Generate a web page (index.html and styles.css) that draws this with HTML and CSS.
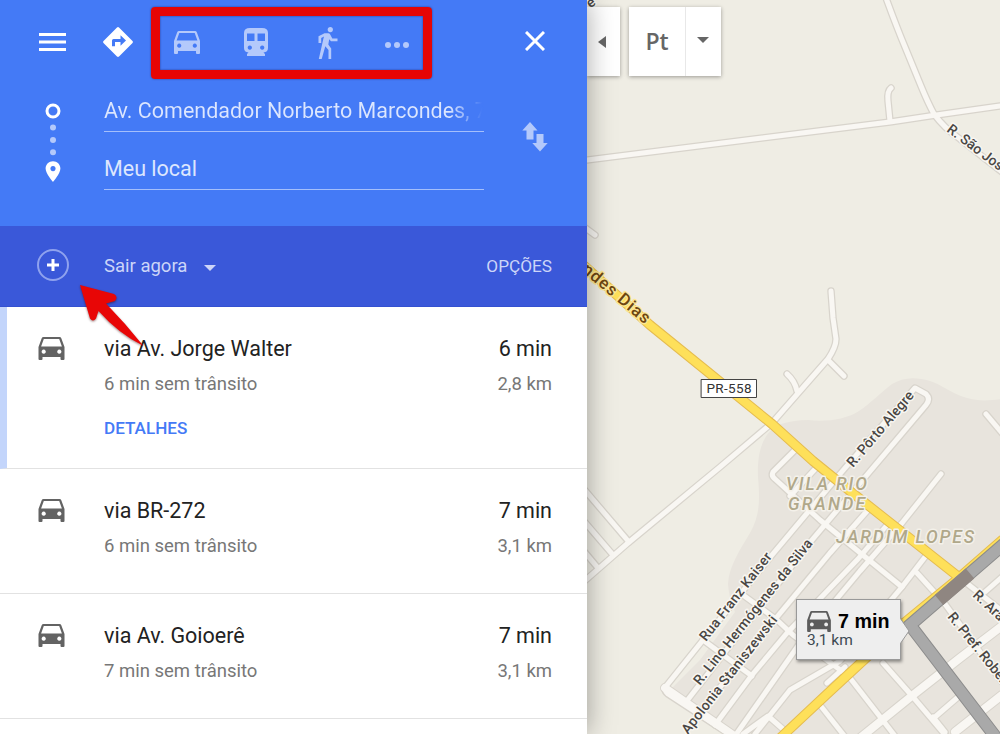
FILE: index.html
```html
<!DOCTYPE html>
<html lang="pt-BR">
<head>
  <meta charset="UTF-8">
  <title>Rotas</title>
  <link rel="stylesheet" href="styles.css">
</head>
<body>
  <!-- shared icons -->
  <svg class="sprite">
    <symbol id="car" viewBox="0 0 26 23">
      <path fill-rule="evenodd" d="M5 0H21Q22.3 0 22.8 1.3L26 10V22Q26 23 25 23H23Q22 23 22 22V20H4V22Q4 23 3 23H1Q0 23 0 22V10L3.2 1.3Q3.7 0 5 0zM5.3 2L2.6 9.4H23.4L20.7 2zM5.2 12.6a2.1 2.1 0 1 0 .01 0zM20.8 12.6a2.1 2.1 0 1 0 .01 0z"/>
    </symbol>
  </svg>

  <div class="app">
    <div class="panel">
      <div class="search">
        <div class="toolbar">
          <button class="toolbar__button">
            <svg width="27" height="18" viewBox="0 0 27 18"><path d="M0 0h27v3H0zM0 7.5h27v3H0zM0 15h27v3H0z"/></svg>
          </button>
          <button class="toolbar__button">
            <svg width="30" height="30" viewBox="0 0 30 30"><path fill-rule="evenodd" d="M14 .5Q15 -.3 16 .5L29.5 14Q30.3 15 29.5 16L16 29.5Q15 30.3 14 29.5L.5 16Q-.3 15 .5 14zM17.5 8.2V12H10.5Q9 12 9 13.5V19.2H12V15H17.5V18.8L23 13.5z"/></svg>
          </button>
          <div class="modes">
            <button class="modes__item"><svg width="26" height="23"><use href="#car"/></svg></button>
            <button class="modes__item">
              <svg width="24" height="28" viewBox="0 0 24 28"><path fill-rule="evenodd" d="M6 0H18Q24 0 24 5V20Q24 24.2 19.5 24.5L21 26V28H3V26L4.5 24.5Q0 24.2 0 20V5Q0 0 6 0zM3 5.5V13H10.5V5.5zM13.5 5.5V13H21V5.5zM5.8 17.5a2.1 2.1 0 1 0 .01 0zM18.2 17.5a2.1 2.1 0 1 0 .01 0z"/></svg>
            </button>
            <button class="modes__item modes__item--walk">
              <svg width="20" height="32" viewBox="0 0 20 32">
                <circle cx="12.3" cy="2.6" r="2.6"/>
                <path d="M6.5 6.3H10.3Q11.5 6.3 12.2 7.6L14.3 11.5H19.5V14.3H13L11.2 12.3L10.3 17.5L13.2 21.5V32H10.5V23L7.3 19.2L3.7 32H.8L5.2 12.5L6 9.5L3.2 11V16H.5V9.3z"/>
              </svg>
            </button>
            <button class="modes__item">
              <svg class="modes__more" width="24" height="6" viewBox="0 0 24 6"><circle cx="3" cy="3" r="3"/><circle cx="12" cy="3" r="3"/><circle cx="21" cy="3" r="3"/></svg>
            </button>
          </div>
          <button class="toolbar__button toolbar__button--close">
            <svg width="20" height="20" viewBox="0 0 20 20"><path class="cross" d="M1 1L19 19M19 1L1 19"/></svg>
          </button>
        </div>

        <div class="waypoints">
          <div class="waypoints__marks">
            <svg width="16" height="80" viewBox="0 0 16 80">
              <circle class="ring" cx="8" cy="8" r="6"/>
              <g class="dots"><circle cx="8" cy="24.5" r="3"/><circle cx="8" cy="37" r="3"/><circle cx="8" cy="49.3" r="3"/></g>
              <path fill-rule="evenodd" d="M8 58.3c4.2 0 7.4 3.2 7.4 7.3 0 5-7.4 13.4-7.4 13.4S.6 70.6.6 65.6c0-4.1 3.2-7.3 7.4-7.3zM8 63a2.6 2.6 0 1 0 .01 0z"/>
            </svg>
          </div>
          <div class="waypoints__fields">
            <div class="field field--long">Av. Comendador Norberto Marcondes, 7</div>
            <div class="field">Meu local</div>
          </div>
          <button class="waypoints__swap">
            <svg width="26" height="30" viewBox="0 0 26 30"><path d="M8 0L15.5 8.5H11.5V17.5H4.5V8.5H.3zM14.5 12H21.5V21H25.7L18 29.5L10.3 21H14.5z"/></svg>
          </button>
        </div>
      </div>

      <div class="depart">
        <button class="depart__add">
          <svg width="32" height="32" viewBox="0 0 32 32"><circle cx="16" cy="16" r="15"/><path d="M10 16H22M16 10V22"/></svg>
        </button>
        <span class="depart__time">Sair agora</span>
        <span class="depart__caret"></span>
        <span class="depart__options">OPÇÕES</span>
      </div>

      <div class="route route--active">
        <svg class="route__icon" width="27" height="23"><use href="#car"/></svg>
        <div class="route__info">
          <h2 class="route__name">via Av. Jorge Walter</h2>
          <p class="route__note">6 min sem trânsito</p>
          <a class="route__details">DETALHES</a>
        </div>
        <div class="route__totals">
          <p class="route__time">6 min</p>
          <p class="route__note">2,8 km</p>
        </div>
      </div>
      <div class="route">
        <svg class="route__icon" width="27" height="23"><use href="#car"/></svg>
        <div class="route__info">
          <h2 class="route__name">via BR-272</h2>
          <p class="route__note">6 min sem trânsito</p>
        </div>
        <div class="route__totals">
          <p class="route__time">7 min</p>
          <p class="route__note">3,1 km</p>
        </div>
      </div>
      <div class="route">
        <svg class="route__icon" width="27" height="23"><use href="#car"/></svg>
        <div class="route__info">
          <h2 class="route__name">via Av. Goioerê</h2>
          <p class="route__note">7 min sem trânsito</p>
        </div>
        <div class="route__totals">
          <p class="route__time">7 min</p>
          <p class="route__note">3,1 km</p>
        </div>
      </div>

      <svg class="arrow" width="70" height="70" viewBox="78 282 70 70">
        <path d="M80 285L114 294Q118.5 297 115 301L106 303.5Q126 324 143.5 346Q119 334 98.5 311L96 318.5Q93 322.5 90 318.5z"/>
      </svg>
    </div>

    <div class="map">
      <svg class="map__canvas" width="413" height="734" viewBox="587 0 413 734">
        <defs>
          <g id="streets">
            <path d="M587 160L890 122L933 115.5L1000 106"/>
            <path d="M886 -2Q897 28 905 47L921 86Q928 103 934 114Q944 128 960 139L1002 172"/>
            <path d="M890 121L888 101Q887 91 891 88"/>
            <path d="M580 224L595 235"/>
            <path d="M831 291L833 318L836 339Q836 347 828 359L772 423L720 467L628 543L580 585"/>
            <path d="M828 360L844 376M787 374Q795 381 797 391"/>
            <path d="M583 488L629 542M583 520L613 555M583 550L598 568"/>
            <path d="M723 730L668 694Q663 690 667 685L703 640L772 555L845 468L915 388L926 394Q931 399 926 405L812 540L686 702"/>
            <path d="M795 450L773 472Q771 476 775 479L820 520L853 547L902 587"/>
            <path d="M817 467L790 496M868 510L830 553L777 617L700 712"/>
            <path d="M887 525L858 559L787 633L752 675L715 725"/>
            <path d="M941 474L902 523L860 571L800 643L735 736"/>
            <path d="M925 557L902 587L840 661L790 690L755 734M743 734L768 716L784 730"/>
            <path d="M743 595L777 620L793 635L843 672M703 640L730 660L752 676"/>
            <path d="M917 573L945 604L1002 682M960 578L1002 611"/>
            <path d="M850 678L895 736M883 663L913 697L946 736M820 705L846 738"/>
            <path d="M935 717L957 698M933 717L945 732M985 592L1002 577M827 683L845 667"/>
            <path d="M986 414L1002 433"/>
          </g>
          <g id="avenues">
            <path d="M860 738L913 695L960 658L1002 626M955 732L1002 695M665 688L740 740"/>
          </g>
          <g id="highways">
            <path d="M580 262L650 325L772 424L813 461L850 491L960 578"/>
            <path d="M778 740L826 695L905 622L955 581L1002 540"/>
          </g>
        </defs>

        <path class="urban" d="M1002 399C988 401 977 401 967 398C950 393 941 384 930 381C914 376 902 378 892 384C880 393 871 403 859 411C845 420 825 422 808 420Q793 420 778 425C762 434 757 454 758 477C760 500 760 515 750 533C740 550 729 566 728 584Q729 599 735 612L700 660L670 690L730 738H1002z"/>

        <use class="casing" href="#streets"/>
        <use class="casing casing--avenue" href="#avenues"/>
        <use class="street" href="#streets"/>
        <use class="street street--avenue" href="#avenues"/>
        <use class="highway-casing" href="#highways"/>
        <use class="highway" href="#highways"/>

        <path class="path-edge" d="M1004 544L910 625L998 740"/>
        <path class="path" d="M1004 544L910 625L998 740"/>
        <path class="path-overlap" d="M939 600L970 573.5"/>

        <text class="label label--highway" transform="translate(581 271) rotate(40)" textLength="83">ndes Dias</text>
        <text class="label" transform="translate(576 20) rotate(-38)" textLength="26">nde</text>
        <text class="label" transform="translate(946 131) rotate(37)">R. São José</text>
        <text class="label" transform="translate(853 468) rotate(-49.5)" textLength="95">R. Pôrto Alegre</text>
        <text class="label" transform="translate(706 642) rotate(-52)" textLength="108">Rua Franz Kaiser</text>
        <text class="label" transform="translate(700 686) rotate(-51.5)" textLength="182">R. Lino Hermógenes da Silva</text>
        <text class="label" transform="translate(688 735) rotate(-52)" textLength="146">Apolonia Staniszewski</text>
        <text class="label" transform="translate(972 596) rotate(43)">R. Araruna</text>
        <text class="label" transform="translate(947 617) rotate(51)">R. Pref. Roberto</text>
        <text class="district" x="786" y="490" textLength="81">VILA RIO</text>
        <text class="district" x="788" y="510" textLength="77">GRANDE</text>
        <text class="district" x="836" y="543" textLength="138">JARDIM LOPES</text>

        <rect class="shield" x="701.5" y="379.5" width="55" height="18"/>
        <text class="shield-text" x="706.5" y="393" textLength="45">PR-558</text>
      </svg>

      <div class="map__controls">
        <button class="collapse"></button>
        <div class="language">
          <span class="language__name">Pt</span>
          <span class="language__caret"></span>
        </div>
      </div>

      <div class="callout">
        <svg class="callout__icon" width="24" height="21"><use href="#car"/></svg>
        <b class="callout__time">7 min</b>
        <span class="callout__distance">3,1 km</span>
        <svg class="callout__tip" width="11" height="28" viewBox="0 0 11 28"><path d="M0 1L9 14L0 27"/></svg>
      </div>
    </div>
  </div>
</body>
</html>
```

FILE: styles.css
```css
*, *:before, *:after {
  box-sizing: border-box;
}

body {
  margin: 0;
  font-family: Roboto, sans-serif;
  overflow: hidden;
}

h2, p {
  margin: 0;
  font-weight: 400;
}

button {
  display: flex;
  align-items: center;
  justify-content: center;
  padding: 0;
  border: 0;
  background: none;
  cursor: pointer;
}

.sprite {
  display: none;
}

.app {
  display: flex;
  height: 734px;
}

/* Panel */
.panel {
  position: relative;
  z-index: 1;
  width: 587px;
  background: #fff;
  box-shadow: 0 0 26px rgba(0,0,0,0.35);
}

.search {
  height: 226px;
  background: #447af6;
  fill: #fff;
}

.toolbar {
  display: flex;
  height: 84px;
  padding: 0 19px;
}

.toolbar__button {
  width: 66px;
}

.toolbar__button--close {
  margin-left: auto;
  padding-bottom: 2px;
}

.cross {
  stroke: #fff;
  stroke-width: 3;
}

.modes {
  position: relative;
  display: flex;
  width: 281px;
  padding-left: 1px;
  fill: #b4c9fb;
}

.modes:after {
  content: '';
  position: absolute;
  top: 7px;
  left: 0;
  width: 281px;
  height: 72px;
  border: 9px solid #e60505;
  border-radius: 4px;
  box-shadow: 0 0 2px rgba(30,20,90,0.7), inset 0 0 2px rgba(30,20,90,0.7);
}

.modes__item {
  flex: 1;
}

.modes__item--walk {
  padding: 2px 0 0 3px;
}

.modes__more {
  margin-top: 5px;
}

.waypoints {
  display: flex;
}

.waypoints__marks {
  width: 104px;
  padding: 19px 0 0 45px;
}

.ring {
  fill: none;
  stroke: #fff;
  stroke-width: 3;
}

.dots {
  fill: #b4c9fb;
}

.waypoints__fields {
  width: 380px;
  padding-top: 6px;
}

.field {
  height: 42px;
  margin-bottom: 16px;
  border-bottom: 1px solid #a5bffb;
  font-size: 21.5px;
  line-height: 42px;
  color: #dce6fe;
  white-space: nowrap;
}

.field--long {
  color: transparent;
  background: linear-gradient(90deg, #dce6fe 345px, #447af6 378px);
  background-clip: text;
  -webkit-background-clip: text;
}

.waypoints__swap {
  width: 26px;
  height: 30px;
  margin: 38px 0 0 38px;
  fill: #b4c9fb;
}

.depart {
  display: flex;
  align-items: center;
  height: 81px;
  padding: 0 35px 3px 37px;
  background: #3a58d9;
  border-bottom: 1px solid #3451d0;
  font-size: 18.5px;
  color: #ccd5f8;
}

.depart__add {
  width: 32px;
  margin-right: 35px;
  fill: none;
}

.depart__add circle {
  stroke: #8fa2ee;
  stroke-width: 2;
}

.depart__add path {
  stroke: #fff;
  stroke-width: 3;
}

.depart__caret {
  margin: 6px 0 0 17px;
  border: 6px solid transparent;
  border-top-color: #ccd5f8;
  border-bottom: 0;
}

.depart__time,
.depart__options {
  padding-top: 2px;
}

.depart__options {
  margin-left: auto;
  font-size: 17.2px;
}

/* Routes */
.route {
  display: flex;
  height: 125px;
  padding: 27px 35px 0 38px;
  border-bottom: 1px solid #e2e2e2;
}

.route--active {
  height: 162px;
  padding-left: 31px;
  border-left: 7px solid #c3d5fb;
}

.route__icon {
  margin-top: 3px;
  fill: #636363;
}

.route__info {
  flex: 1;
  margin-left: 39px;
}

.route__totals {
  text-align: right;
}

.route__name,
.route__time {
  font-size: 21.5px;
  line-height: 30px;
  color: #222;
}

.route__note {
  padding-top: 8px;
  font-size: 18.5px;
  line-height: 24px;
  color: #777;
}

.route__details {
  display: block;
  margin-top: 20px;
  font-size: 17.1px;
  font-weight: 500;
  line-height: 24px;
  color: #447af6;
}

.arrow {
  position: absolute;
  top: 282px;
  left: 78px;
  fill: #e80606;
  filter: drop-shadow(0 1px 1px rgba(60,0,0,0.5));
}

/* Map */
.map {
  position: relative;
  flex: 1;
  background: #efede4;
}

.map__canvas {
  display: block;
  fill: none;
  stroke-linejoin: round;
  stroke-linecap: round;
}

.urban {
  fill: #e8e4dd;
}

.casing {
  stroke: #d8d4cc;
  stroke-width: 7.5;
}

.casing--avenue {
  stroke-width: 10;
}

.street {
  stroke: #f9f7f3;
  stroke-width: 5;
}

.street--avenue {
  stroke-width: 8;
}

.highway-casing {
  stroke: #e5bc50;
  stroke-width: 10;
}

.highway {
  stroke: #fee05a;
  stroke-width: 8;
}

.path-edge {
  stroke: #8c8c8c;
  stroke-width: 13;
  stroke-linejoin: miter;
}

.path {
  stroke: #a9a9a9;
  stroke-width: 11;
  stroke-linejoin: miter;
}

.path-overlap {
  stroke: #8f8681;
  stroke-width: 13;
  stroke-linecap: butt;
}

.label {
  font-size: 14px;
  font-weight: 500;
  fill: #4a4744;
  stroke: #f8f6f1;
  stroke-width: 3;
  paint-order: stroke;
}

.label--highway {
  font-size: 17px;
  fill: #6d4611;
  stroke: #fde795;
}

.district {
  font-size: 17.5px;
  font-style: italic;
  font-weight: 500;
  fill: #b0a88a;
  stroke: #f4f1ea;
  stroke-width: 3;
  paint-order: stroke;
}

.shield {
  fill: #fff;
  stroke: #444;
}

.shield-text {
  font-size: 13.5px;
  fill: #333;
}

.map__controls {
  position: absolute;
  top: 7px;
  left: 0;
  display: flex;
  gap: 9px;
  height: 69px;
}

.collapse,
.language {
  background: #fff;
  box-shadow: 0 1px 4px rgba(0,0,0,0.35);
}

.collapse {
  width: 33px;
}

.collapse:after {
  content: '';
  margin-right: 3px;
  border: 6px solid transparent;
  border-right: 8px solid #666;
  border-left: 0;
}

.language {
  display: flex;
  width: 92px;
}

.language__name {
  width: 57px;
  border-right: 1px solid #e8e8e8;
  font-family: "Open Sans", sans-serif;
  font-size: 23px;
  font-weight: 600;
  line-height: 68px;
  text-align: center;
  color: #666;
}

.language__caret {
  margin: 30px 0 0 11px;
  height: 6px;
  border: 6px solid transparent;
  border-top-color: #666;
  border-bottom: 0;
}

.callout {
  position: absolute;
  top: 599px;
  left: 209px;
  display: grid;
  grid-template-columns: 31px 1fr;
  align-content: start;
  width: 105px;
  height: 61px;
  padding: 11px 0 0 10px;
  background: #eee;
  border: 1px solid #999;
  box-shadow: 1px 2px 3px rgba(0,0,0,0.4);
}

.callout__icon {
  fill: #5c5c5c;
}

.callout__time {
  font-family: "Liberation Sans", sans-serif;
  font-size: 19.7px;
  line-height: 20px;
  color: #000;
}

.callout__distance {
  grid-column: 1 / 3;
  font-size: 15.5px;
  line-height: 17px;
  color: #3d4a52;
}

.callout__tip {
  position: absolute;
  top: 17px;
  left: 103px;
  fill: #eee;
  stroke: #999;
}
```
